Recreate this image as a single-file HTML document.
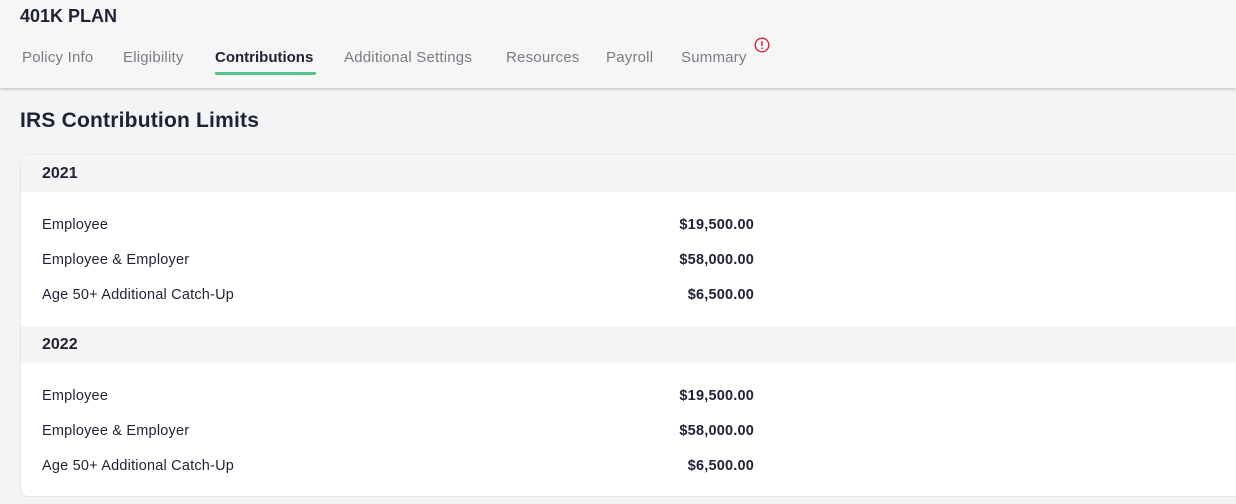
<!DOCTYPE html>
<html><head><style>
*{margin:0;padding:0;box-sizing:border-box}
body{width:1236px;height:504px;overflow:hidden;background:#f3f4f6;font-family:"Liberation Sans",sans-serif;color:#1f2235;position:relative}
.hdr{position:absolute;left:0;top:0;width:1236px;height:88px;background:#f6f6f6;box-shadow:0 1px 3px rgba(0,0,0,.25)}
.t{position:absolute;top:49px;font-size:15px;color:#7a7c85;white-space:nowrap;letter-spacing:.2px}
.a{color:#1f2235;font-weight:bold;letter-spacing:0}
.ul{position:absolute;left:215px;top:72px;width:101px;height:3px;background:#52c48e;border-radius:1px}
h1{position:absolute;left:20px;top:6px;font-size:18px;font-weight:bold}
h2{position:absolute;left:20px;top:109px;font-size:21px;font-weight:bold;color:#1f2235;letter-spacing:.2px}
.card{position:absolute;left:20px;top:154px;width:1230px;height:343px;background:#fff;border:1px solid #e6e7ea;border-radius:8px;overflow:hidden}
.yr{position:absolute;left:0;width:100%;height:37px;background:#f5f5f5;font-weight:bold;font-size:16px;padding:10px 0 0 21px}
.l{position:absolute;left:21px;font-size:14.5px;letter-spacing:.2px}
.v{position:absolute;right:495px;font-size:14.5px;font-weight:bold;text-align:right;letter-spacing:.2px}
</style></head><body>
<div class="hdr">
<h1>401K PLAN</h1>
<div class="t" style="left:22px">Policy Info</div>
<div class="t" style="left:123px">Eligibility</div>
<div class="t a" style="left:215px">Contributions</div>
<div class="t" style="left:344px">Additional Settings</div>
<div class="t" style="left:506px">Resources</div>
<div class="t" style="left:606px">Payroll</div>
<div class="t" style="left:681px">Summary</div>
<svg style="position:absolute;left:754px;top:37px" width="16" height="16" viewBox="0 0 16 16"><circle cx="8" cy="8" r="6.8" fill="none" stroke="#d0263a" stroke-width="1.4"/><line x1="8" y1="4.3" x2="8" y2="9" stroke="#d0263a" stroke-width="1.5"/><circle cx="8" cy="11.3" r=".9" fill="#d0263a"/></svg>
<div class="ul"></div>
</div>
<h2>IRS Contribution Limits</h2>
<div class="card">
<div class="yr" style="top:0">2021</div>
<div class="l" style="top:62px">Employee</div><div class="v" style="top:62px">$19,500.00</div>
<div class="l" style="top:97px">Employee &amp; Employer</div><div class="v" style="top:97px">$58,000.00</div>
<div class="l" style="top:132px">Age 50+ Additional Catch-Up</div><div class="v" style="top:132px">$6,500.00</div>
<div class="yr" style="top:171px">2022</div>
<div class="l" style="top:233px">Employee</div><div class="v" style="top:233px">$19,500.00</div>
<div class="l" style="top:268px">Employee &amp; Employer</div><div class="v" style="top:268px">$58,000.00</div>
<div class="l" style="top:303px">Age 50+ Additional Catch-Up</div><div class="v" style="top:303px">$6,500.00</div>
</div>
</body></html>
